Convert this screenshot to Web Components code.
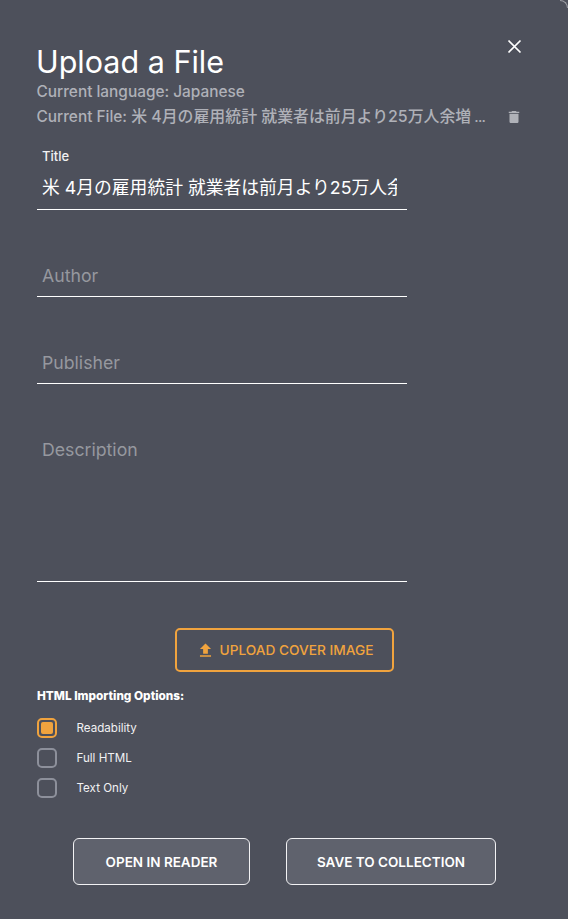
<!DOCTYPE html>
<html lang="en">
<head>
<meta charset="utf-8">
<title>Upload a File</title>
<style>
	html, body { margin: 0; background: #4d505b; }
	body { font-family: Inter, "Noto Sans CJK JP", sans-serif; }
	.ja { font-size: 15.9px; }
	.dots { font-size: 14.5px; letter-spacing: -0.8px; }
</style>
</head>
<body>
<upload-modal>
	<span slot="language">Current language: Japanese</span>
	<span slot="file">Current File: <span class="ja">米 4月の雇用統計 就業者は前月より25万人余増</span><span class="dots"> ...</span></span>
	<text-field label="Title" value="米 4月の雇用統計 就業者は前月より25万人余増加" style="height:68px"></text-field>
	<text-field label="Author" style="height:87px"></text-field>
	<text-field label="Publisher" style="height:87px"></text-field>
	<text-field label="Description" style="height:198px"></text-field>
	<option-row slot="options" checked>Readability</option-row>
	<option-row slot="options">Full HTML</option-row>
	<option-row slot="options">Text Only</option-row>
	<action-button slot="actions" style="width:177px">OPEN IN READER</action-button>
	<action-button slot="actions" style="width:210px">SAVE TO COLLECTION</action-button>
</upload-modal>

<script>
const FONT = 'Inter, "Noto Sans CJK JP", sans-serif';

class TextField extends HTMLElement {
	constructor() {
		super();
		const root = this.attachShadow({ mode: 'open' });
		const value = this.getAttribute('value');
		const label = this.getAttribute('label');
		root.innerHTML = `
			<style>
				:host {
					display: block;
					box-sizing: border-box;
					width: 370px;
					border-bottom: 1px solid #fff;
					padding: 6px 5px 0;
					font-family: ${FONT};
				}
				.label { font-size: 13px; font-weight: 500; color: #f1f1f3; line-height: 16px; height: 16px; }
				.value { font-size: 17.8px; color: #fff; line-height: 24px; margin-top: 12px; white-space: nowrap; overflow: hidden; width: 355px; }
				.empty { font-size: 17.7px; color: #96989f; line-height: 24px; margin-top: 48px; }
			</style>
			${value
				? `<div class="label">${label}</div><div class="value">${value}</div>`
				: `<div class="empty">${label}</div>`}
		`;
	}
}

class OptionRow extends HTMLElement {
	constructor() {
		super();
		const root = this.attachShadow({ mode: 'open' });
		root.innerHTML = `
			<style>
				:host {
					display: flex;
					align-items: center;
					height: 30px;
					font-family: ${FONT};
					font-size: 11.6px;
					color: #f1f1f3;
				}
				.box {
					box-sizing: border-box;
					width: 20px;
					height: 20px;
					margin-right: 19.5px;
					border: 2px solid #8d909b;
					border-radius: 5px;
					display: flex;
					align-items: center;
					justify-content: center;
				}
				:host([checked]) .box { border-color: #f0a33e; }
				:host([checked]) .box::after {
					content: '';
					width: 12px;
					height: 12px;
					border-radius: 2px;
					background: #f0a33e;
				}
			</style>
			<span class="box"></span><slot></slot>
		`;
	}
}

class ActionButton extends HTMLElement {
	constructor() {
		super();
		const root = this.attachShadow({ mode: 'open' });
		root.innerHTML = `
			<style>
				:host {
					display: flex;
					align-items: center;
					justify-content: center;
					box-sizing: border-box;
					height: 47px;
					background: #5f626d;
					border: 1px solid #f2f2f4;
					border-radius: 6px;
					font-family: ${FONT};
					font-size: 13.5px;
					font-weight: 600;
					color: #fff;
				}
			</style>
			<slot></slot>
		`;
	}
}

class UploadModal extends HTMLElement {
	constructor() {
		super();
		const root = this.attachShadow({ mode: 'open' });
		root.innerHTML = `
			<style>
				:host {
					display: block;
					box-sizing: border-box;
					position: relative;
					width: 568px;
					height: 919px;
					padding: 43px 0 0 37px;
					background: #4d505b;
					font-family: ${FONT};
				}
				.corner {
					position: absolute;
					top: 0;
					right: 0;
					width: 8px;
					height: 8px;
					box-sizing: border-box;
					border-top: 1px solid #9c9da4;
					border-right: 1px solid #9c9da4;
					border-radius: 0 8px 0 0;
				}
				h1 { margin: 0 0 0 -1px; font-size: 30.5px; font-weight: 400; line-height: 38px; color: #fff; }
				.sub { font-size: 15.4px; font-weight: 500; color: #afb1b8; line-height: 20px; margin-left: -0.5px; }
				.lang { margin-top: 1px; }
				.file { display: flex; align-items: center; width: 486px; justify-content: space-between; margin-top: 5px; white-space: nowrap; }
				.close { position: absolute; top: 39px; left: 507px; }
				.fields { margin-top: 15px; }
				.upload {
					display: flex;
					align-items: center;
					justify-content: center;
					box-sizing: border-box;
					width: 219px;
					height: 44px;
					margin: 46px 0 0 138px;
					border: 2px solid #f0a33e;
					border-radius: 5px;
					color: #f0a33e;
					font-size: 13.7px;
					font-weight: 500;
				}
				.upload svg { margin-right: 5px; }
				.heading { margin-top: 17px; font-size: 11.8px; font-weight: 800; line-height: 14px; color: #fff; }
				.options { margin-top: 10px; }
				.actions { display: flex; gap: 36px; margin: 35px 0 0 36px; }
			</style>
			<span class="corner"></span>
			<h1>Upload a File</h1>
			<div class="sub lang"><slot name="language"></slot></div>
			<div class="sub file">
				<slot name="file"></slot>
				<svg width="18" height="16" viewBox="0 0 24 24" preserveAspectRatio="none" fill="#afb1b8"><path d="M6 19c0 1.1.9 2 2 2h8c1.1 0 2-.9 2-2V7H6v12zM19 4h-3.5l-1-1h-5l-1 1H5v2h14V4z"/></svg>
			</div>
			<svg class="close" width="15" height="15" viewBox="0 0 15 15" stroke="#fff" stroke-width="1.7" fill="none"><path d="M1.5 1.5l12 12M13.5 1.5l-12 12"/></svg>
			<div class="fields"><slot></slot></div>
			<div class="upload">
				<svg width="19" height="19" viewBox="0 0 24 24" fill="#f0a33e"><path d="M5 20h14v-2H5v2zM9 16h6v-6h4l-7-7-7 7h4v6z"/></svg>
				UPLOAD COVER IMAGE
			</div>
			<div class="heading">HTML Importing Options:</div>
			<div class="options"><slot name="options"></slot></div>
			<div class="actions"><slot name="actions"></slot></div>
		`;
	}
}

customElements.define('text-field', TextField);
customElements.define('option-row', OptionRow);
customElements.define('action-button', ActionButton);
customElements.define('upload-modal', UploadModal);
</script>
</body>
</html>
